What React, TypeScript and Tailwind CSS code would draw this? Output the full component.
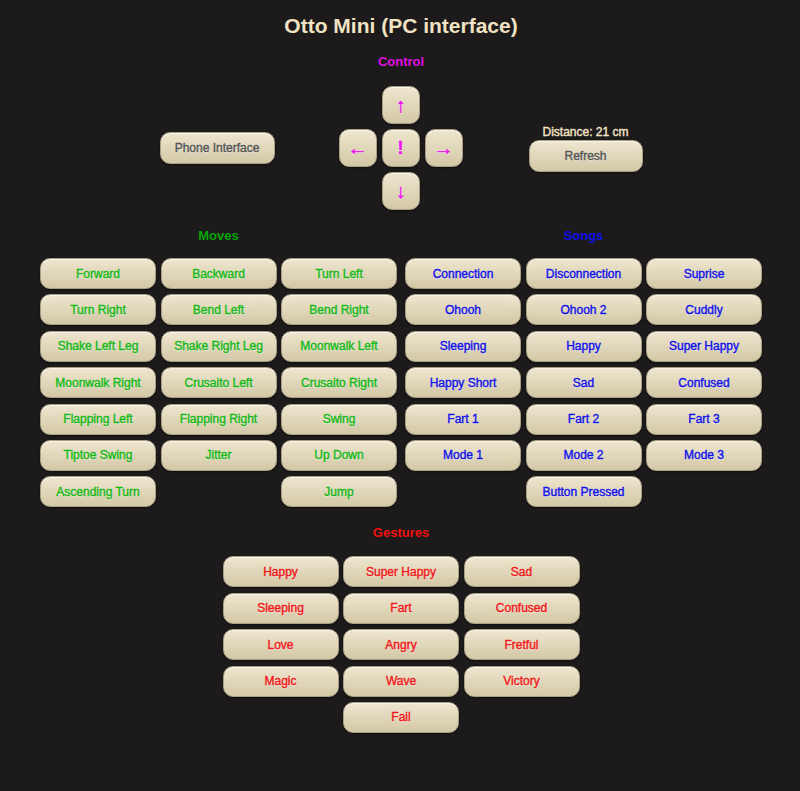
import React from "react";

const btn =
  "flex items-center justify-center rounded-[10px] border border-[#a99f85] bg-linear-to-b from-[#eee6cf] to-[#d3c8a6] shadow-[inset_0_1px_0_rgba(255,255,255,0.6),0_1px_2px_rgba(0,0,0,0.5)] text-[12px] leading-none [-webkit-text-stroke:0.4px_currentColor] [text-shadow:0_1px_1px_rgba(255,255,255,0.7)]";

// null = empty cell in the grid
const moves: (string | null)[] = [
  "Forward", "Backward", "Turn Left",
  "Turn Right", "Bend Left", "Bend Right",
  "Shake Left Leg", "Shake Right Leg", "Moonwalk Left",
  "Moonwalk Right", "Crusaito Left", "Crusaito Right",
  "Flapping Left", "Flapping Right", "Swing",
  "Tiptoe Swing", "Jitter", "Up Down",
  "Ascending Turn", null, "Jump",
];

const songs: (string | null)[] = [
  "Connection", "Disconnection", "Suprise",
  "Ohooh", "Ohooh 2", "Cuddly",
  "Sleeping", "Happy", "Super Happy",
  "Happy Short", "Sad", "Confused",
  "Fart 1", "Fart 2", "Fart 3",
  "Mode 1", "Mode 2", "Mode 3",
  null, "Button Pressed", null,
];

const gestures: (string | null)[] = [
  "Happy", "Super Happy", "Sad",
  "Sleeping", "Fart", "Confused",
  "Love", "Angry", "Fretful",
  "Magic", "Wave", "Victory",
  null, "Fail", null,
];

function ButtonGrid({ items, color }: { items: (string | null)[]; color: string }) {
  return (
    <div className="grid grid-cols-[116px_116px_116px] auto-rows-[31px] gap-x-[4.5px] gap-y-[5.4px]">
      {items.map((label, i) =>
        label ? (
          <button key={i} className={`${btn} ${color}`}>
            {label}
          </button>
        ) : (
          <div key={i} />
        )
      )}
    </div>
  );
}

function PadButton({ children }: { children: React.ReactNode }) {
  return (
    <button className={`${btn} h-[38px] w-[38px] text-[20px] text-[#ee10ee]`}>{children}</button>
  );
}

export default function App() {
  return (
    <div
      className="min-h-[791px] w-full bg-[#1c1a1a] pt-[12px] pl-[2px] text-center"
      style={{ fontFamily: '"Liberation Sans", Arial, sans-serif' }}
    >
      <h1 className="text-[21px] font-bold leading-[28px] text-[#f0e2c2]">Otto Mini (PC interface)</h1>

      {/* Control */}
      <h2 className="mt-[14px] text-[13px] font-bold leading-[16px] text-[#e010e0]">Control</h2>
      <div className="mt-[16px] flex items-center justify-center">
        <button className={`${btn} h-[32px] w-[115px] text-[#555]`}>Phone Interface</button>
        <div className="ml-[64px] grid grid-cols-[38px_38px_38px] grid-rows-[38px_38px_38px] gap-[5px]">
          <div />
          <PadButton>↑</PadButton>
          <div />
          <PadButton>←</PadButton>
          <PadButton><span className="text-[18px] font-bold">!</span></PadButton>
          <PadButton>→</PadButton>
          <div />
          <PadButton>↓</PadButton>
          <div />
        </div>
        <div className="ml-[66px] flex w-[114px] flex-col items-center">
          <span className="text-[12px] leading-[14px] text-[#f2e3c4] [-webkit-text-stroke:0.4px_currentColor]">Distance: 21 cm</span>
          <button className={`${btn} mt-[1px] h-[32px] w-[114px] text-[#555]`}>Refresh</button>
        </div>
      </div>

      {/* Moves & Songs */}
      <div className="mt-[18px] flex justify-center gap-[8px]">
        <div className="flex flex-col items-center">
          <h2 className="text-[13px] font-bold leading-[16px] text-[#07a507]">Moves</h2>
          <div className="mt-[14px]">
            <ButtonGrid items={moves} color="text-[#16b816]" />
          </div>
        </div>
        <div className="flex flex-col items-center">
          <h2 className="text-[13px] font-bold leading-[16px] text-[#1010e8]">Songs</h2>
          <div className="mt-[14px]">
            <ButtonGrid items={songs} color="text-[#1212e6]" />
          </div>
        </div>
      </div>

      {/* Gestures */}
      <h2 className="mt-[18px] text-[13px] font-bold leading-[16px] text-[#f01010]">Gestures</h2>
      <div className="mt-[15px] flex justify-center">
        <ButtonGrid items={gestures} color="text-[#f01818]" />
      </div>
    </div>
  );
}
